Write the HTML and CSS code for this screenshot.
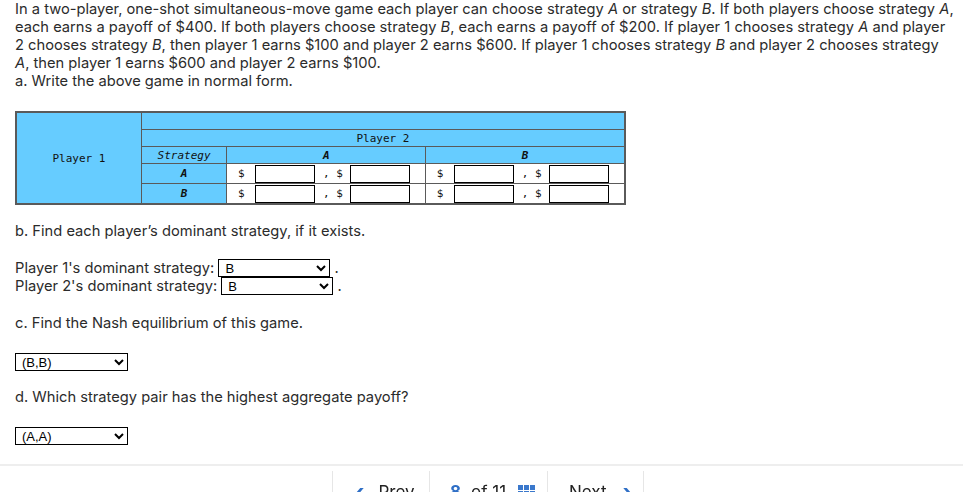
FILE: index.html
```html
<!DOCTYPE html>
<html lang="en">
<head>
<meta charset="utf-8">
<title>Game theory question</title>
<link rel="stylesheet" href="styles.css">
</head>
<body>
<main class="question">
  <p class="prompt">In a two-player, one-shot simultaneous-move game each player can choose strategy <i>A</i> or strategy <i>B</i>. If both players choose strategy <i>A</i>,<br>each earns a payoff of $400. If both players choose strategy <i>B</i>, each earns a payoff of $200. If player 1 chooses strategy <i>A</i> and player<br>2 chooses strategy <i>B</i>, then player 1 earns $100 and player 2 earns $600. If player 1 chooses strategy <i>B</i> and player 2 chooses strategy<br><i>A</i>, then player 1 earns $600 and player 2 earns $100.<br>a. Write the above game in normal form.</p>

  <table class="game">
    <tr class="hrow">
      <td class="p1" rowspan="5">Player 1</td>
      <td colspan="3"></td>
    </tr>
    <tr class="hrow">
      <td colspan="3" class="p2">Player 2</td>
    </tr>
    <tr class="hrow">
      <td class="strat"><i>Strategy</i></td>
      <td class="lbl"><b><i>A</i></b></td>
      <td class="lbl"><b><i>B</i></b></td>
    </tr>
    <tr class="drow">
      <td class="lbl"><b><i>A</i></b></td>
      <td class="pay"><div class="cell"><span class="cur">$</span><input class="amt" type="text"><span class="sep">, $</span><input class="amt" type="text"></div></td>
      <td class="pay"><div class="cell"><span class="cur">$</span><input class="amt" type="text"><span class="sep">, $</span><input class="amt" type="text"></div></td>
    </tr>
    <tr class="drow">
      <td class="lbl"><b><i>B</i></b></td>
      <td class="pay"><div class="cell"><span class="cur">$</span><input class="amt" type="text"><span class="sep">, $</span><input class="amt" type="text"></div></td>
      <td class="pay"><div class="cell"><span class="cur">$</span><input class="amt" type="text"><span class="sep">, $</span><input class="amt" type="text"></div></td>
    </tr>
  </table>

  <p class="part part-b">b. Find each player’s dominant strategy, if it exists.</p>
  <div class="answers">
    <div class="line">Player 1's dominant strategy:&nbsp;<select class="pick"><option>B</option></select>&nbsp;.</div>
    <div class="line">Player 2's dominant strategy:&nbsp;<select class="pick"><option>B</option></select>&nbsp;.</div>
  </div>

  <p class="part part-c">c. Find the Nash equilibrium of this game.</p>
  <select class="pick solo"><option>(B,B)</option></select>

  <p class="part part-d">d. Which strategy pair has the highest aggregate payoff?</p>
  <select class="pick solo"><option>(A,A)</option></select>
</main>

<footer class="navbar">
  <div class="nav">
    <div class="navitem prev"><span class="chev">‹</span><span class="navtxt">Prev</span></div>
    <div class="navitem mid"><span class="num">8</span><span class="navtxt">of 11</span>
      <span class="grid"><i></i><i></i><i></i><i></i><i></i><i></i><i></i><i></i><i></i></span>
    </div>
    <div class="navitem next"><span class="navtxt">Next</span><span class="chev">›</span></div>
  </div>
</footer>
</body>
</html>
```

FILE: styles.css
```css
html, body {
  margin: 0;
  padding: 0;
  background: #fff;
  overflow: hidden;
}

body {
  font-family: Inter, "Open Sans", "Liberation Sans", sans-serif;
  font-size: 14.7px;
  line-height: 18px;
  color: #2b2b2b;
}

.question {
  padding: 0 15px;
}

.prompt {
  margin: 0;
  white-space: nowrap;
}

.game {
  margin-top: 21px;
  border-collapse: collapse;
  border: 2px solid #5a5a5a;
  font-family: "DejaVu Sans Mono", "Liberation Mono", monospace;
  font-size: 11px;
  line-height: 13px;
  color: #111;
  width: 611px;
}

.game td {
  border: 1px solid #5a5a5a;
  background: #66ccff;
  padding: 0;
  text-align: center;
}

.game .p1 {
  width: 125px;
}

.game .strat {
  width: 85px;
}

.hrow td {
  height: 16px;
}

.drow td {
  height: 19px;
}

.game td.pay {
  background: #fff;
  width: 198px;
}

.cell {
  display: flex;
  align-items: center;
}

.cur {
  width: 28px;
  text-align: center;
}

.sep {
  width: 35px;
  text-align: center;
}

.amt {
  width: 60px;
  height: 18px;
  box-sizing: border-box;
  border: 1px solid #000;
  margin: 0;
  padding: 0 2px;
  font: 12px "Liberation Sans", sans-serif;
  background: #fff;
}

.part {
  margin: 0;
}

.part-b {
  margin-top: 17px;
}

.answers {
  margin-top: 19px;
}

.line {
  display: flex;
  align-items: center;
  height: 18px;
}

.pick {
  width: 112px;
  height: 18px;
  box-sizing: border-box;
  border: 1px solid #000;
  border-radius: 0;
  background: #fff;
  color: #000;
  font: 13px "Liberation Sans", Arial, sans-serif;
  padding: 0 0 0 2px;
  margin: 0;
}

.part-c {
  margin-top: 19px;
}

.solo {
  display: block;
  width: 113px;
  height: 18px;
  margin-top: 21px;
}

.part-d {
  margin-top: 17px;
}

.navbar {
  position: fixed;
  left: 0;
  right: 0;
  top: 464px;
  border-top: 2px solid #eeeeee;
}

.nav {
  display: flex;
  margin-left: 332px;
  margin-top: 5px;
}

.navitem {
  height: 60px;
  border-left: 1px solid #e6e6e6;
  display: flex;
  align-items: flex-start;
  padding-top: 11px;
  box-sizing: border-box;
  font-size: 17px;
  line-height: 20px;
  color: #222;
}

.prev {
  width: 97px;
  padding-left: 22px;
}

.mid {
  width: 118px;
  padding-left: 20px;
}

.next {
  width: 97px;
  padding-left: 21px;
  border-right: 1px solid #e6e6e6;
}

.chev {
  color: #2f6fc6;
  font-weight: 700;
  font-size: 22px;
  margin: 0 14px 0 0;
}

.next .chev {
  margin: 0 0 0 16px;
}

.num {
  color: #2f6fc6;
  font-weight: 700;
  margin-right: 10px;
}

.grid {
  display: grid;
  grid-template-columns: repeat(3, 5px);
  grid-auto-rows: 5px;
  gap: 1px;
  margin: 3px 0 0 12px;
}

.grid i {
  background: #3a78cc;
}
```
